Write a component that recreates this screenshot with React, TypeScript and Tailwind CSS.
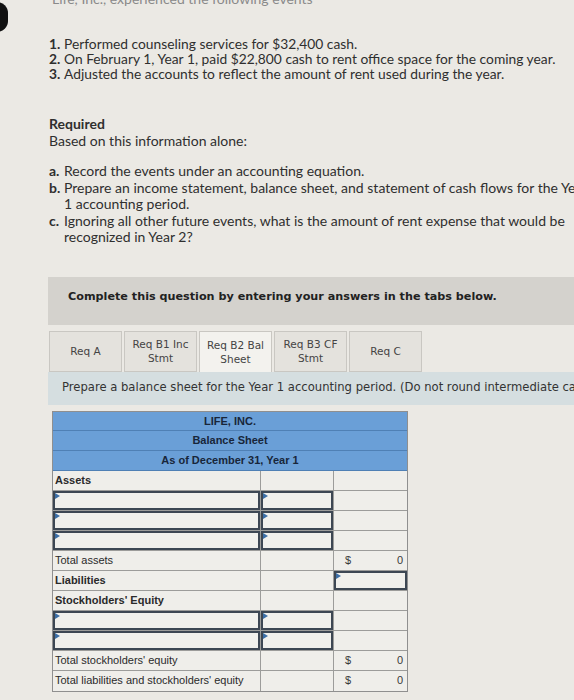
import React from "react";

const events = [
  "Performed counseling services for $32,400 cash.",
  "On February 1, Year 1, paid $22,800 cash to rent office space for the coming year.",
  "Adjusted the accounts to reflect the amount of rent used during the year.",
];

const tabs = [
  { label: ["Req A"], active: false },
  { label: ["Req B1 Inc", "Stmt"], active: false },
  { label: ["Req B2 Bal", "Sheet"], active: true },
  { label: ["Req B3 CF", "Stmt"], active: false },
  { label: ["Req C"], active: false },
];

type Row =
  | { kind: "label"; text: string; bold?: boolean; col3Input?: boolean }
  | { kind: "input" }
  | { kind: "total"; text: string };

const rows: Row[] = [
  { kind: "label", text: "Assets", bold: true },
  { kind: "input" },
  { kind: "input" },
  { kind: "input" },
  { kind: "total", text: "Total assets" },
  { kind: "label", text: "Liabilities", bold: true, col3Input: true },
  { kind: "label", text: "Stockholders' Equity", bold: true },
  { kind: "input" },
  { kind: "input" },
  { kind: "total", text: "Total stockholders' equity" },
  { kind: "total", text: "Total liabilities and stockholders' equity" },
];

function InputCell() {
  return (
    <div className="relative h-full w-full border-2 border-[#3d4753] bg-[#f1f0ec]">
      <span className="absolute left-0 top-0 h-0 w-0 border-y-[3px] border-l-[5px] border-y-transparent border-l-[#3d6fa6]" />
    </div>
  );
}

function BalanceTable() {
  return (
    <div
      className="ml-[52px] mt-[6px] w-[356px] border border-[#8f8f8f] text-[11px] text-[#2a2a2a]"
      style={{ fontFamily: "'Liberation Sans', Arial, sans-serif" }}
    >
      {["LIFE, INC.", "Balance Sheet", "As of December 31, Year 1"].map((t) => (
        <div
          key={t}
          className="flex h-[19.7px] items-center justify-center border-b border-[#4f80b5] bg-[#6a9fd7] font-bold text-[#18263a]"
        >
          {t}
        </div>
      ))}
      {rows.map((r, i) => (
        <div key={i} className="grid h-[20px] grid-cols-[208px_73px_1fr] border-b border-[#9c9c9a] bg-[#efeeea] last:border-b-0">
          <div className="border-r border-[#9c9c9a]">
            {r.kind === "input" ? (
              <InputCell />
            ) : (
              <div className={`flex h-full items-center pl-[2px] ${r.kind === "label" && r.bold ? "font-bold" : ""}`}>{r.text}</div>
            )}
          </div>
          <div className="border-r border-[#9c9c9a]">{r.kind === "input" ? <InputCell /> : null}</div>
          <div>
            {r.kind === "total" ? (
              <div className="flex h-full items-center justify-between pl-[11px] pr-[4px] text-[11px] text-[#3a3a3a]">
                <span>$</span>
                <span>0</span>
              </div>
            ) : r.kind === "label" && r.col3Input ? (
              <InputCell />
            ) : null}
          </div>
        </div>
      ))}
    </div>
  );
}

export default function App() {
  return (
    <div
      className="relative h-[700px] w-[574px] overflow-hidden bg-[#ebe9e4] text-[14px] text-[#2f2f2f]"
      style={{ fontFamily: "Lato, 'Open Sans', sans-serif" }}
    >
      {/* photo edge artifacts */}
      <div className="absolute -left-[14px] top-[2px] h-[30px] w-[22px] rounded-full bg-[#111]" />
      <div className="absolute left-[52px] -top-[12px] text-[14px] text-[#8a8a8a]">Life, Inc., experienced the following events</div>

      <div className="pl-[49px] pt-[36px]">
        <ol className="text-[13.8px]">
          {events.map((e, i) => (
            <li key={i} className="flex h-[15px] items-center whitespace-nowrap leading-[15px]">
              <span className="w-[15px] font-bold">{i + 1}.</span>
              <span>{e}</span>
            </li>
          ))}
        </ol>

        <div className="mt-[35px] leading-[16.5px]">
          <div className="font-bold">Required</div>
          <div>Based on this information alone:</div>
        </div>

        <ol className="mt-[14px] leading-[16.5px]">
          <li className="flex">
            <span className="w-[15px] shrink-0 font-bold">a.</span>
            <span>Record the events under an accounting equation.</span>
          </li>
          <li className="flex">
            <span className="w-[15px] shrink-0 font-bold">b.</span>
            <span className="whitespace-nowrap">
              Prepare an income statement, balance sheet, and statement of cash flows for the Year
              <br />1 accounting period.
            </span>
          </li>
          <li className="flex">
            <span className="w-[15px] shrink-0 font-bold">c.</span>
            <span className="whitespace-nowrap">
              Ignoring all other future events, what is the amount of rent expense that would be
              <br />
              recognized in Year 2?
            </span>
          </li>
        </ol>
      </div>

      <div style={{ fontFamily: "'DejaVu Sans', Verdana, sans-serif" }}>
        <div className="ml-[48px] mt-[31px] h-[48px] bg-[#d4d2cd] pl-[20px] pt-[12px] text-[11.2px] font-bold whitespace-nowrap text-[#222]">
          Complete this question by entering your answers in the tabs below.
        </div>

        <div className="ml-[49px] mt-[6px] flex h-[41px] gap-[2px]">
          {tabs.map((t, i) => (
            <div
              key={i}
              className={`flex w-[73px] flex-col items-center justify-center border border-[#c9c7c2] text-[10.5px] leading-[14px] text-[#444] ${
                t.active ? "border-b-0 bg-[#f3f2ee]" : "bg-[#e4e2dd]"
              }`}
            >
              {t.label.map((l) => (
                <span key={l}>{l}</span>
              ))}
            </div>
          ))}
        </div>

        <div className="ml-[48px] flex h-[33px] items-center whitespace-nowrap bg-[#d5dee0] pl-[14px] text-[11.6px] text-[#333]">
          Prepare a balance sheet for the Year 1 accounting period. (Do not round intermediate calculations.)
        </div>
      </div>

      <BalanceTable />
    </div>
  );
}
